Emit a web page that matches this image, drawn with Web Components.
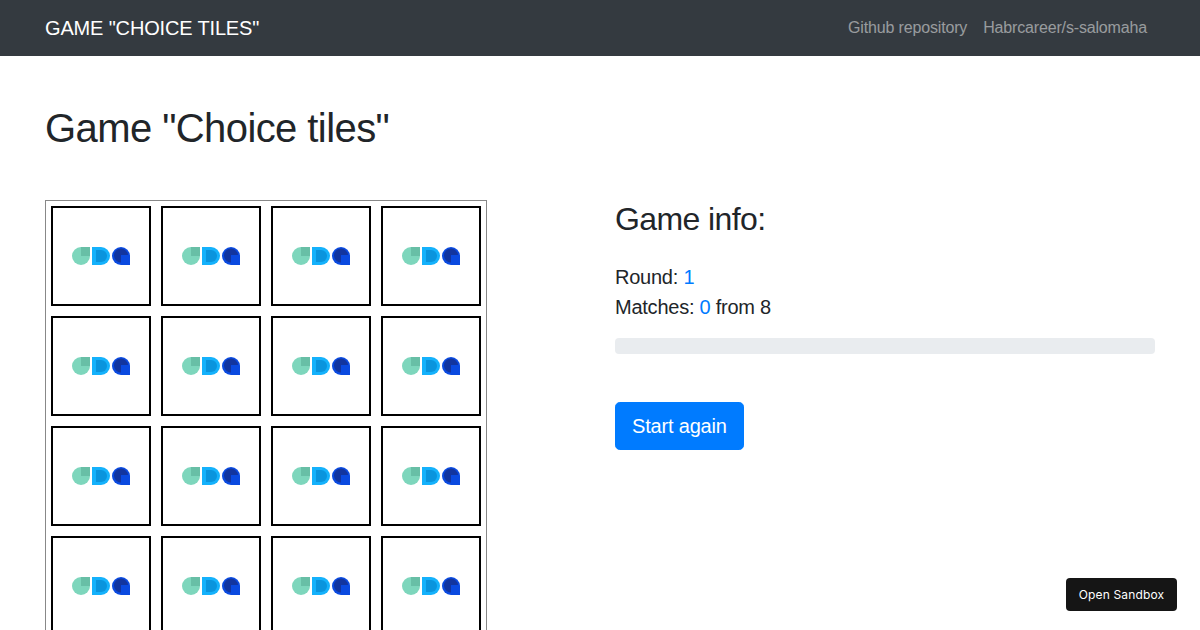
<!DOCTYPE html>
<html lang="en">
<head>
<meta charset="utf-8">
<title>Game "Choice tiles"</title>
<style>
    html, body {
        margin: 0;
        height: 100%;
        overflow: hidden;
        background: #fff;
        font-family: "Liberation Sans", Arial, sans-serif;
        color: #212529;
    }
</style>
</head>
<body>
<app-navbar>
    <span slot="brand">GAME "CHOICE TILES"</span>
    <span slot="links">Github repository</span>
    <span slot="links">Habrcareer/s-salomaha</span>
</app-navbar>
<game-page>
    <game-board slot="board"></game-board>
    <game-info slot="info"></game-info>
</game-page>
<sandbox-button>Open Sandbox</sandbox-button>

<script>
class AppNavbar extends HTMLElement {
    constructor() {
        super();
        this.attachShadow({ mode: 'open' });
    }

    connectedCallback() {
        this.shadowRoot.innerHTML = `
        <style>
            :host {
                display: block;
            }

            nav {
                box-sizing: border-box;
                height: 56px;
                background: #343a40;
                padding: 0 45px;
                display: flex;
                align-items: center;
                justify-content: space-between;
            }

            .brand {
                color: #fff;
                font-size: 20px;
                line-height: 30px;
                letter-spacing: -0.16px;
            }

            .links {
                display: flex;
                color: rgba(255, 255, 255, 0.5);
                font-size: 16px;
                line-height: 24px;
                letter-spacing: -0.16px;
            }

            ::slotted([slot="links"]) {
                padding: 0 8px;
            }
        </style>
        <nav>
            <div class="brand"><slot name="brand"></slot></div>
            <div class="links"><slot name="links"></slot></div>
        </nav>
        `;
    }
}

class GamePage extends HTMLElement {
    constructor() {
        super();
        this.attachShadow({ mode: 'open' });
    }

    connectedCallback() {
        this.shadowRoot.innerHTML = `
        <style>
            :host {
                display: block;
            }

            .container {
                padding: 48px 45px 0;
            }

            h1 {
                margin: 0 0 48px;
                font-size: 40px;
                font-weight: 400;
                line-height: 48px;
                letter-spacing: -0.58px;
            }

            .row {
                display: grid;
                grid-template-columns: 570px 540px;
                align-items: start;
            }
        </style>
        <div class="container">
            <h1>Game "Choice tiles"</h1>
            <div class="row">
                <slot name="board"></slot>
                <slot name="info"></slot>
            </div>
        </div>
        `;
    }
}

class GameBoard extends HTMLElement {
    constructor() {
        super();
        this.attachShadow({ mode: 'open' });
    }

    connectedCallback() {
        const tiles = Array.from({ length: 16 }, () => '<game-tile></game-tile>').join('');
        this.shadowRoot.innerHTML = `
        <style>
            :host {
                display: block;
                width: 442px;
                box-sizing: border-box;
                border: 1px solid #888;
            }

            .grid {
                display: grid;
                grid-template-columns: repeat(4, 100px);
                gap: 10px;
                padding: 5px;
            }
        </style>
        <div class="grid">${tiles}</div>
        `;
    }
}

class GameTile extends HTMLElement {
    constructor() {
        super();
        this.attachShadow({ mode: 'open' });
    }

    connectedCallback() {
        this.shadowRoot.innerHTML = `
        <style>
            :host {
                display: flex;
                align-items: center;
                justify-content: center;
                box-sizing: border-box;
                width: 100px;
                height: 100px;
                border: 2px solid #000;
                background: #fff;
            }

            svg {
                display: block;
            }
        </style>
        <svg width="58" height="18" viewBox="0 0 58 18" aria-hidden="true">
            <path d="M9 0H18V9A9 9 0 1 1 9 0Z" fill="#7dd6bc"/>
            <rect x="9" y="0" width="9" height="9" fill="#68bfa6"/>
            <path d="M20 0H29A9 9 0 0 1 29 18H20Z" fill="#14b1fb"/>
            <path d="M24 3H29A6 6 0 0 1 29 15H24Z" fill="#0a94dd"/>
            <path d="M49 0A9 9 0 0 1 58 9V18H49A9 9 0 0 1 49 0Z" fill="#0a4ae0"/>
            <path d="M49 1.500A7.500 7.500 0 0 1 56 8H49V15.500A7 7 0 0 1 49 1.500Z" fill="#12359f"/>
        </svg>
        `;
    }
}

class GameInfo extends HTMLElement {
    constructor() {
        super();
        this.attachShadow({ mode: 'open' });
    }

    connectedCallback() {
        this.shadowRoot.innerHTML = `
        <style>
            :host {
                display: block;
            }

            h3 {
                margin: 0 0 24px;
                font-size: 32px;
                font-weight: 400;
                line-height: 38px;
                letter-spacing: -0.6px;
            }

            p {
                margin: 0;
                font-size: 20px;
                line-height: 30px;
                letter-spacing: -0.24px;
            }

            .num {
                color: #007bff;
            }

            .progress {
                height: 16px;
                margin: 16px 0 48px;
                background: #e9ecef;
                border-radius: 4px;
            }

            button {
                display: block;
                height: 48px;
                padding: 0 16px;
                border: 1px solid #007bff;
                border-radius: 4.8px;
                background: #007bff;
                color: #fff;
                font: 20px/30px "Liberation Sans", Arial, sans-serif;
                letter-spacing: -0.18px;
            }
        </style>
        <h3>Game info:</h3>
        <p>Round: <span class="num">1</span></p>
        <p>Matches: <span class="num">0</span> from 8</p>
        <div class="progress"></div>
        <button type="button">Start again</button>
        `;
    }
}

class SandboxButton extends HTMLElement {
    constructor() {
        super();
        this.attachShadow({ mode: 'open' });
    }

    connectedCallback() {
        this.shadowRoot.innerHTML = `
        <style>
            :host {
                position: fixed;
                right: 23px;
                bottom: 19px;
                display: flex;
                align-items: center;
                justify-content: center;
                box-sizing: border-box;
                width: 111px;
                height: 33px;
                background: #151515;
                border-radius: 4px;
                color: #fff;
                font: 12px "Inter", "Liberation Sans", sans-serif;
                letter-spacing: 0.16px;
            }
        </style>
        <slot></slot>
        `;
    }
}

customElements.define('app-navbar', AppNavbar);
customElements.define('game-page', GamePage);
customElements.define('game-board', GameBoard);
customElements.define('game-tile', GameTile);
customElements.define('game-info', GameInfo);
customElements.define('sandbox-button', SandboxButton);
</script>
</body>
</html>
